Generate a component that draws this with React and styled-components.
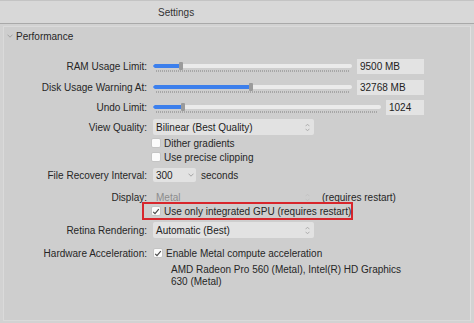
import React from 'react';
import styled, { createGlobalStyle } from 'styled-components';

const GlobalStyle = createGlobalStyle`
  html, body {
    margin: 0;
    padding: 0;
    background: #d2d2d2;
  }
  body {
    font-family: "Liberation Sans", Arial, sans-serif;
    font-size: 10px;
    color: #262626;
  }
`;

const Window = styled.div`
  width: 474px;
  height: 323px;
  display: flex;
  flex-direction: column;
  background: #d2d2d2;
  border-top: 1px solid #c4c4c4;
  box-sizing: border-box;
  overflow: hidden;
`;

const TitleBar = styled.div`
  height: 22px;
  flex-shrink: 0;
  display: flex;
  align-items: center;
  padding-left: 158px;
  background: #d8d8d8;
  border-bottom: 1px solid #a9a9a9;
  color: #333;
  font-size: 10px;
`;

const Panel = styled.div`
  flex: 1;
  margin: 2px 3px 2px 3px;
  padding-top: 2px;
  background: #cecece;
  border: 1px solid #dadada;
  border-right-color: #e0e0e0;
`;

const SectionHeader = styled.div`
  display: flex;
  align-items: center;
  height: 14px;
  padding-left: 3px;
  gap: 3px;
`;

const Row = styled.div`
  display: flex;
  align-items: center;
  height: 14px;
  margin-top: ${(p) => p.$gap || 0}px;
`;

const Label = styled.div`
  width: 143px;
  flex-shrink: 0;
  margin-right: 6px;
  text-align: right;
  white-space: nowrap;
`;

const Control = styled.div`
  display: flex;
  align-items: center;
  margin-left: ${(p) => p.$shift || 0}px;
  white-space: nowrap;
`;

const SliderWrap = styled.div`
  position: relative;
  width: ${(p) => p.$width}px;
  height: 14px;
`;

const Track = styled.div`
  position: absolute;
  left: 0;
  right: 0;
  top: 5px;
  height: 4px;
  border-radius: 3px;
  background: #ebebeb;
  overflow: hidden;
`;

const Fill = styled.div`
  height: 100%;
  background: #3c7fec;
  border-radius: 3px;
`;

const Ticks = styled.div`
  position: absolute;
  left: 3px;
  right: 3px;
  top: 11px;
  height: 2px;
  background: repeating-linear-gradient(90deg, #a6a6a6 0 1px, transparent 1px 2px);
`;

const Thumb = styled.div`
  position: absolute;
  top: 3px;
  width: 4px;
  height: 8px;
  margin-left: -2px;
  border-radius: 1px;
  background: #9b9b9b;
`;

const Field = styled.div`
  width: ${(p) => p.$width}px;
  height: 15px;
  margin-left: 5px;
  padding-left: 3px;
  box-sizing: border-box;
  display: flex;
  align-items: center;
  background: #e3e3e3;
  color: #222;
`;

const Popup = styled.div`
  width: ${(p) => p.$width || 161}px;
  height: 16px;
  box-sizing: border-box;
  padding: 0 4px 0 3px;
  display: flex;
  align-items: center;
  justify-content: space-between;
  border-radius: 2px;
  background: ${(p) => (p.$disabled ? 'transparent' : '#e2e2e2')};
  color: ${(p) => (p.$disabled ? '#8c8c8c' : '#222')};
`;

const Combo = styled(Popup)`
  height: 14px;
  padding-right: 2px;
`;

const Aside = styled.span`
  margin-left: ${(p) => p.$gap || 5}px;
`;

const Box = styled.span`
  width: 10px;
  height: 10px;
  flex-shrink: 0;
  box-sizing: border-box;
  border-radius: 2px;
  background: #fbfbfb;
  border: 0.5px solid #c4c4c4;
  margin-right: 3px;
  display: flex;
  align-items: center;
  justify-content: center;
`;

const Highlight = styled.div`
  display: flex;
  align-items: center;
  width: 211px;
  height: 18px;
  box-sizing: border-box;
  margin-left: -11px;
  padding-left: 7px;
  border: 2px solid #d8262c;
`;

const Info = styled.div`
  margin-top: 4px;
  margin-left: 167px;
  line-height: 12px;
  color: #262626;
`;

const Chevron = () => (
  <svg width="6" height="4" viewBox="0 0 6 4">
    <path d="M0.5 0.7 L3 3.2 L5.5 0.7" fill="none" stroke="#9d9d9d" strokeWidth="0.9" />
  </svg>
);

const UpDown = ({ faint }) => (
  <svg width="5" height="9" viewBox="0 0 5 9">
    <path
      d="M0.6 3.2 L2.5 1.2 L4.4 3.2 M0.6 5.8 L2.5 7.8 L4.4 5.8"
      fill="none"
      stroke={faint ? '#c2c2c2' : '#a8a8a8'}
      strokeWidth="0.9"
    />
  </svg>
);

const Check = () => (
  <svg width="8" height="7" viewBox="0 0 8 7">
    <path d="M1.2 3.8 L3 5.6 L6.8 1.2" fill="none" stroke="#4a4a4a" strokeWidth="1.2" />
  </svg>
);

const Checkbox = ({ checked, children }) => (
  <>
    <Box>{checked && <Check />}</Box>
    <span>{children}</span>
  </>
);

const Slider = ({ width, value }) => (
  <SliderWrap $width={width}>
    <Track>
      <Fill style={{ width: `${value * 100}%` }} />
    </Track>
    <Ticks />
    <Thumb style={{ left: `${value * 100}%` }} />
  </SliderWrap>
);

export default function App() {
  return (
    <>
      <GlobalStyle />
      <Window>
        <TitleBar>Settings</TitleBar>
        <Panel>
          <SectionHeader>
            <Chevron />
            <span>Performance</span>
          </SectionHeader>

          <Row $gap={16}>
            <Label>RAM Usage Limit:</Label>
            <Control>
              <Slider width={199} value={0.14} />
              <Field $width={67}>9500 MB</Field>
            </Control>
          </Row>
          <Row $gap={7}>
            <Label>Disk Usage Warning At:</Label>
            <Control>
              <Slider width={199} value={0.49} />
              <Field $width={67}>32768 MB</Field>
            </Control>
          </Row>
          <Row $gap={6}>
            <Label>Undo Limit:</Label>
            <Control>
              <Slider width={228} value={0.13} />
              <Field $width={38}>1024</Field>
            </Control>
          </Row>
          <Row $gap={6}>
            <Label>View Quality:</Label>
            <Control>
              <Popup>
                <span>Bilinear (Best Quality)</span>
                <UpDown />
              </Popup>
            </Control>
          </Row>
          <Row $gap={2}>
            <Label />
            <Control $shift={-2}>
              <Checkbox>Dither gradients</Checkbox>
            </Control>
          </Row>
          <Row $gap={0}>
            <Label />
            <Control $shift={-2}>
              <Checkbox>Use precise clipping</Checkbox>
            </Control>
          </Row>
          <Row $gap={4}>
            <Label>File Recovery Interval:</Label>
            <Control>
              <Combo $width={43}>
                <span>300</span>
                <Chevron />
              </Combo>
              <Aside $gap={5}>seconds</Aside>
            </Control>
          </Row>
          <Row $gap={8}>
            <Label>Display:</Label>
            <Control>
              <Popup $disabled>
                <span>Metal</span>
                <UpDown faint />
              </Popup>
              <Aside $gap={8}>(requires restart)</Aside>
            </Control>
          </Row>
          <Row $gap={0}>
            <Label />
            <Control>
              <Highlight>
                <Checkbox checked>Use only integrated GPU (requires restart)</Checkbox>
              </Highlight>
            </Control>
          </Row>
          <Row $gap={5}>
            <Label>Retina Rendering:</Label>
            <Control>
              <Popup>
                <span>Automatic (Best)</span>
                <UpDown />
              </Popup>
            </Control>
          </Row>
          <Row $gap={9}>
            <Label>Hardware Acceleration:</Label>
            <Control>
              <Checkbox checked>Enable Metal compute acceleration</Checkbox>
            </Control>
          </Row>
          <Info>
            AMD Radeon Pro 560 (Metal), Intel(R) HD Graphics
            <br />
            630 (Metal)
          </Info>
        </Panel>
      </Window>
    </>
  );
}
